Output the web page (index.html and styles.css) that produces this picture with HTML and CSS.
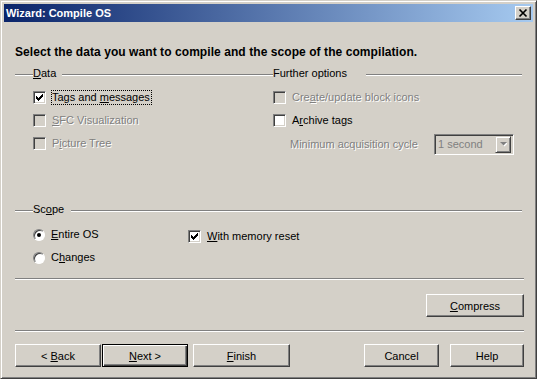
FILE: index.html
```html
<!DOCTYPE html>
<html lang="en">
<head>
    <meta charset="UTF-8" />
    <title>Wizard: Compile OS</title>
    <link rel="stylesheet" href="styles.css">
</head>
<body>

    <div class="window">
        <div class="titlebar">
            <span class="title">Wizard: Compile OS</span>
            <span class="close">
                <svg width="14" height="12" viewBox="0 0 14 12">
                    <path d="M3.5 2.5 L10.5 9.5 M10.5 2.5 L3.5 9.5" stroke="#000" stroke-width="1.7" fill="none"/>
                </svg>
            </span>
        </div>

        <div class="content">
            <p class="intro">Select the data you want to compile and the scope of the compilation.</p>

            <div class="groups">
                <div class="group data">
                    <div class="group-head">
                        <span class="rule lead"></span>
                        <span class="group-label"><u>D</u>ata</span>
                        <span class="rule fill"></span>
                    </div>
                    <div class="option">
                        <span class="check checked"></span>
                        <span class="text focus">Tags and <u>m</u>essages</span>
                    </div>
                    <div class="option">
                        <span class="check disabled"></span>
                        <span class="text disabled"><u>S</u>FC Visualization</span>
                    </div>
                    <div class="option">
                        <span class="check disabled"></span>
                        <span class="text disabled">P<u>i</u>cture Tree</span>
                    </div>
                </div>

                <div class="group further">
                    <div class="group-head">
                        <span class="rule lead"></span>
                        <span class="group-label">Further options</span>
                        <span class="rule fill"></span>
                    </div>
                    <div class="option">
                        <span class="check disabled"></span>
                        <span class="text disabled">Cre<u>a</u>te/update block icons</span>
                    </div>
                    <div class="option">
                        <span class="check"></span>
                        <span class="text">A<u>r</u>chive tags</span>
                    </div>
                    <div class="cycle">
                        <span class="text disabled">Minimum acquisition cycle</span>
                        <div class="combo">
                            <span class="combo-text">1 second</span>
                            <span class="combo-btn">
                                <svg width="7" height="5" viewBox="0 0 7 5">
                                    <path d="M1 1 H8 L4.5 4.5 Z" fill="#fff"/>
                                    <path d="M0 0 H7 L3.5 3.5 Z" fill="#808080"/>
                                </svg>
                            </span>
                        </div>
                    </div>
                </div>
            </div>

            <div class="group scope">
                <div class="group-head">
                    <span class="rule lead"></span>
                    <span class="group-label">Sc<u>o</u>pe</span>
                    <span class="rule fill"></span>
                </div>
                <div class="scope-grid">
                    <div class="option">
                        <span class="radio checked"></span>
                        <span class="text"><u>E</u>ntire OS</span>
                    </div>
                    <div class="option">
                        <span class="check checked"></span>
                        <span class="text"><u>W</u>ith memory reset</span>
                    </div>
                    <div class="option">
                        <span class="radio"></span>
                        <span class="text">C<u>h</u>anges</span>
                    </div>
                </div>
            </div>

            <div class="separator first"></div>

            <div class="compress-row">
                <button type="button" class="btn compress"><u>C</u>ompress</button>
            </div>

            <div class="separator"></div>

            <div class="nav-row">
                <button type="button" class="btn back">&lt; <u>B</u>ack</button>
                <button type="button" class="btn next default"><u>N</u>ext &gt;</button>
                <button type="button" class="btn finish"><u>F</u>inish</button>
                <button type="button" class="btn cancel">Cancel</button>
                <button type="button" class="btn help">Help</button>
            </div>
        </div>
    </div>

</body>
</html>
```

FILE: styles.css
```css
body {
    margin: 0;
    font-family: 'Liberation Sans', Arial, sans-serif;
    font-size: 11px;
    line-height: 13px;
    color: #000;
    background: #d4d0c8;
    overflow: hidden;
}
.window {
    width: 537px;
    height: 379px;
    box-sizing: border-box;
    border: 1px solid;
    border-color: #d4d0c8 #404040 #404040 #d4d0c8;
    box-shadow: inset 1px 1px #fff, inset -1px -1px #808080;
    padding: 3px;
    background: #d4d0c8;
}
.titlebar {
    height: 18px;
    display: flex;
    align-items: center;
    padding: 0 2px;
    background: linear-gradient(to right, #0a246a, #a6caf0);
}
.title {
    color: #fff;
    font-weight: bold;
    font-size: 11px;
    flex: 1;
}
.close {
    width: 16px;
    height: 14px;
    box-sizing: border-box;
    background: #d4d0c8;
    border: 1px solid;
    border-color: #fff #404040 #404040 #fff;
    box-shadow: inset -1px -1px #808080;
    display: flex;
    align-items: center;
    justify-content: center;
}
.content {
    padding: 24px 9px 0 11px;
}
.intro {
    margin: 0;
    font-weight: bold;
    font-size: 12px;
    letter-spacing: 0.07px;
}
.groups {
    display: flex;
    margin-top: 8px;
}
.group.data {
    width: 252px;
}
.group.further {
    flex: 1;
    margin-right: 2px;
}
.group-head {
    display: flex;
    height: 13px;
    margin-bottom: 10px;
}
.rule {
    height: 2px;
    box-sizing: border-box;
    border-top: 1px solid #808080;
    border-bottom: 1px solid #fff;
    margin-top: 7px;
}
.rule.lead {
    width: 18px;
}
.further .rule.lead {
    width: 6px;
}
.rule.fill {
    flex: 1;
}
.group-label {
    padding-right: 6px;
}
.further .group-label {
    padding-right: 19px;
}
.scope .group-label {
    padding-right: 7px;
}
.option {
    display: flex;
    align-items: center;
    height: 15px;
    margin-bottom: 8px;
}
.data .option {
    padding-left: 18px;
}
.further .option {
    padding-left: 6px;
}
.check {
    width: 13px;
    height: 13px;
    box-sizing: border-box;
    border: 1px solid;
    border-color: #808080 #fff #fff #808080;
    box-shadow: inset 1px 1px #404040, inset -1px -1px #d4d0c8;
    background: #fff;
    flex: none;
}
.check.disabled {
    background: #d4d0c8;
}
.check.checked {
    background: #fff url("data:image/svg+xml;utf8,<svg xmlns='http://www.w3.org/2000/svg' width='11' height='11' viewBox='0 0 11 11' shape-rendering='crispEdges'><path d='M2 4h1v1h1v1h1v-1h1v-1h1v-1h1v-1h1v3h-1v1h-1v1h-1v1h-1v1h-1v-1h-1v-1h-1z' fill='black'/></svg>") no-repeat 0 0;
}
.radio {
    width: 12px;
    height: 12px;
    box-sizing: border-box;
    border-radius: 50%;
    border: 1px solid;
    border-color: #808080 #fff #fff #808080;
    box-shadow: inset 1px 1px #404040;
    background: #fff;
    flex: none;
    position: relative;
}
.radio.checked::after {
    content: "";
    position: absolute;
    left: 3px;
    top: 3px;
    width: 4px;
    height: 4px;
    border-radius: 50%;
    background: #000;
}
.text {
    margin-left: 6px;
    white-space: nowrap;
}
.text.focus {
    margin-left: 5px;
    border: 1px dotted #000;
    padding-right: 1px;
}
.text.disabled {
    color: #808080;
    text-shadow: 1px 1px 0 #fff;
}
.cycle {
    display: flex;
    align-items: center;
    height: 21px;
    margin-top: -2px;
    padding-left: 23px;
}
.cycle .text {
    margin-left: 0;
}
.combo {
    margin-left: auto;
    margin-right: 8px;
    width: 80px;
    height: 21px;
    box-sizing: border-box;
    border: 1px solid;
    border-color: #808080 #fff #fff #808080;
    box-shadow: inset 1px 1px #404040, inset -1px -1px #d4d0c8;
    padding: 2px;
    display: flex;
    align-items: center;
}
.combo-text {
    flex: 1;
    color: #808080;
    padding-left: 1px;
}
.combo-btn {
    width: 16px;
    height: 17px;
    box-sizing: border-box;
    border: 1px solid;
    border-color: #d4d0c8 #404040 #404040 #d4d0c8;
    box-shadow: inset 1px 1px #fff, inset -1px -1px #808080;
    display: flex;
    align-items: center;
    justify-content: center;
}
.scope {
    margin-top: 44px;
    margin-right: 2px;
}
.scope .group-head {
    margin-bottom: 11px;
}
.scope-grid {
    display: grid;
    grid-template-columns: 155px 1fr;
    padding-left: 18px;
}
.scope-grid .option:nth-child(2) {
    margin-top: 2px;
    margin-bottom: 6px;
}
.separator {
    height: 2px;
    border-top: 1px solid #808080;
    border-bottom: 1px solid #fff;
    box-sizing: border-box;
}
.separator.first {
    margin-top: 5px;
}
.compress-row {
    display: flex;
    justify-content: flex-end;
    margin: 14px 0 13px;
}
.btn {
    height: 23px;
    box-sizing: border-box;
    font-family: 'Liberation Sans', Arial, sans-serif;
    font-size: 11px;
    color: #000;
    background: #d4d0c8;
    border: 1px solid;
    border-color: #fff #404040 #404040 #fff;
    box-shadow: inset -1px -1px #808080;
    padding: 0;
    margin: 0;
}
.btn.default {
    border-color: #000;
    box-shadow: inset 1px 1px #fff, inset -1px -1px #404040, inset -2px -2px #808080;
}
.compress {
    width: 98px;
}
.nav-row {
    display: flex;
    margin-top: 12px;
}
.back {
    width: 86px;
}
.next {
    width: 86px;
    margin-left: 1px;
}
.finish {
    width: 97px;
    margin-left: 5px;
}
.cancel {
    width: 75px;
    margin-left: auto;
}
.help {
    width: 74px;
    margin-left: 11px;
}
```
